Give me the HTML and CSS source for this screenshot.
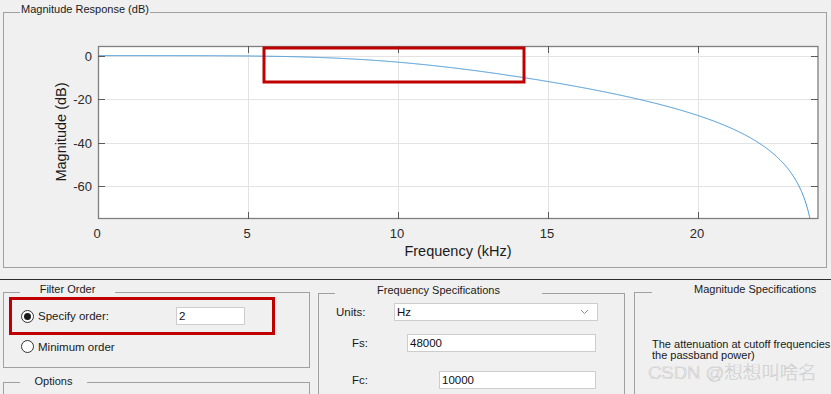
FILE: index.html
```html
<!DOCTYPE html>
<html lang="en">
<head>
  <meta charset="UTF-8">
  <title>Filter Designer</title>
  <link rel="stylesheet" href="styles.css">
</head>
<body>
  <div class="plot-panel">
    <span class="panel-title plot-title">Magnitude Response (dB)</span>
    <svg class="plot" width="822" height="254" viewBox="4 13 822 254">
      <defs>
        <clipPath id="axclip"><rect x="98" y="46" width="720" height="173"/></clipPath>
      </defs>
      <rect x="98" y="46" width="720" height="173" fill="#fff"/>
      <g class="grid" id="grid"></g>
      <polyline id="curve" class="curve" clip-path="url(#axclip)" points=""/>
      <rect class="axbox" x="98.5" y="46.5" width="719.5" height="172"/>
      <g class="ticks" id="ticks"></g>
      <g class="tick-labels" id="labels"></g>
      <text class="axis-label" x="458" y="256" text-anchor="middle">Frequency (kHz)</text>
      <text class="axis-label" transform="translate(66,132) rotate(-90)" text-anchor="middle">Magnitude (dB)</text>
      <rect class="mark" x="264" y="48" width="260" height="34"/>
    </svg>
  </div>

  <div class="separator"></div>

  <div class="controls">
    <div class="left-col">
      <div class="group filter-order">
        <span class="panel-title fo-title">Filter Order</span>
        <div class="highlight">
          <span class="radio checked"></span>
          <span class="radio-label">Specify order:</span>
          <input class="field order-field" type="text" value="2">
        </div>
        <div class="radio-row">
          <span class="radio"></span>
          <span class="radio-label">Minimum order</span>
        </div>
      </div>
      <div class="group options">
        <span class="panel-title opt-title">Options</span>
      </div>
    </div>

    <div class="group freq-spec">
      <span class="panel-title fs-title">Frequency Specifications</span>
      <div class="spec-row units-row">
        <span class="spec-label units-label">Units:</span>
        <div class="field select">
          <span>Hz</span>
          <svg width="9" height="6" viewBox="0 0 9 6"><polyline points="1,1 4.5,4.5 8,1" fill="none" stroke="#8a8a8a" stroke-width="1"/></svg>
        </div>
      </div>
      <div class="spec-row fs-row">
        <span class="spec-label">Fs:</span>
        <input class="field fs-field" type="text" value="48000">
      </div>
      <div class="spec-row fc-row">
        <span class="spec-label">Fc:</span>
        <input class="field fc-field" type="text" value="10000">
      </div>
    </div>

    <div class="group mag-spec">
      <span class="panel-title ms-title">Magnitude Specifications</span>
      <p class="note">The attenuation at cutoff frequencies<br>the passband power)</p>
      <div class="watermark">CSDN @想想叫啥名</div>
    </div>
  </div>

  <script>
    // axes mapping: 0..24 kHz -> x 98..818, dB -> y
    const X0 = 98, PX_PER_KHZ = 30;
    const Y0 = 55.6, PX_PER_DB = 2.18;
    const NS = 'http://www.w3.org/2000/svg';

    function el(tag, attrs, text) {
      const e = document.createElementNS(NS, tag);
      for (const k in attrs) e.setAttribute(k, attrs[k]);
      if (text !== undefined) e.textContent = text;
      return e;
    }

    const grid = document.getElementById('grid');
    const ticks = document.getElementById('ticks');
    const labels = document.getElementById('labels');

    [0, 5, 10, 15, 20].forEach(k => {
      const x = Math.round(X0 + k * PX_PER_KHZ) + 0.5;
      if (k > 0) {
        grid.appendChild(el('line', { x1: x, y1: 46, x2: x, y2: 219 }));
        ticks.appendChild(el('line', { x1: x, y1: 219, x2: x, y2: 212 }));
        ticks.appendChild(el('line', { x1: x, y1: 46, x2: x, y2: 53 }));
      }
      labels.appendChild(el('text', { x: X0 + k * PX_PER_KHZ - 1, y: 238, 'text-anchor': 'middle' }, String(k)));
    });

    [0, -20, -40, -60].forEach(d => {
      const y = Math.round(Y0 - d * PX_PER_DB) + 0.5;
      grid.appendChild(el('line', { x1: 98, y1: y, x2: 818, y2: y }));
      ticks.appendChild(el('line', { x1: 98, y1: y, x2: 105, y2: y }));
      ticks.appendChild(el('line', { x1: 811, y1: y, x2: 818, y2: y }));
      labels.appendChild(el('text', { x: 92, y: y + 4.5, 'text-anchor': 'end' }, String(d)));
    });

    // 2nd order Butterworth lowpass, Fc = 10 kHz, Fs = 48 kHz (bilinear)
    const wc = Math.tan(Math.PI * 10 / 48);
    const pts = [];
    for (let px = 98; px <= 818; px += 0.5) {
      const f = (px - X0) / PX_PER_KHZ;
      const r = Math.tan(Math.PI * Math.min(f, 23.999) / 48) / wc;
      const db = -10 * Math.log10(1 + Math.pow(r, 4));
      const y = Math.min(Y0 - db * PX_PER_DB, 240);
      pts.push(px.toFixed(1) + ',' + y.toFixed(2));
      if (y >= 240) break;
    }
    document.getElementById('curve').setAttribute('points', pts.join(' '));
  </script>
</body>
</html>
```

FILE: styles.css
```css
body {
  margin: 0;
  width: 831px;
  height: 394px;
  overflow: hidden;
  background: #f0f0f0;
  font-family: 'Liberation Sans', Arial, sans-serif;
  color: #1a1a1a;
  font-size: 11px;
}
.panel-title {
  position: absolute;
  top: -10px;
  height: 13px;
  line-height: 13px;
  font-size: 11px;
  background: #f0f0f0;
  color: #1a1a1a;
  text-align: center;
  white-space: nowrap;
}
.plot-panel {
  position: relative;
  margin: 12px 0 0 3px;
  width: 822px;
  height: 254px;
  border: 1px solid #a0a0a0;
}
.plot-title {
  left: 16px;
  width: 130px;
}
.plot {
  display: block;
}
.grid line {
  stroke: #e3e3e3;
  stroke-width: 1;
}
.ticks line {
  stroke: #5a5a5a;
  stroke-width: 1;
}
.axbox {
  fill: none;
  stroke: #7f7f7f;
  stroke-width: 1.3;
}
.curve {
  fill: none;
  stroke: #3f93d3;
  stroke-width: 1;
}
.tick-labels text {
  font-family: 'Liberation Sans', Arial, sans-serif;
  font-size: 13px;
  fill: #2a2a2a;
}
.axis-label {
  font-family: 'Liberation Sans', Arial, sans-serif;
  font-size: 14.5px;
  fill: #1a1a1a;
}
.mark {
  fill: none;
  stroke: #c00000;
  stroke-width: 3;
}
.separator {
  margin-top: 11px;
  height: 0;
  border-top: 1px solid #2e2e2e;
}
.controls {
  display: flex;
  align-items: flex-start;
  width: 831px;
  height: 114px;
  overflow: hidden;
}
.group {
  position: relative;
  box-sizing: border-box;
  border: 1px solid #a0a0a0;
}
.left-col {
  display: flex;
  flex-direction: column;
  gap: 14px;
  margin: 12px 0 0 3px;
  flex: 0 0 307px;
}
.filter-order {
  height: 76px;
}
.fo-title {
  left: 16px;
  width: 95px;
}
.options {
  height: 12px;
  border-bottom: none;
}
.opt-title {
  left: 16px;
  width: 67px;
  top: -8px;
}
.highlight {
  box-sizing: border-box;
  display: flex;
  align-items: center;
  width: 266px;
  height: 38px;
  margin: 4px 0 0 5px;
  padding-left: 9px;
  border: 3px solid #c00000;
}
.radio {
  box-sizing: border-box;
  flex: 0 0 13px;
  width: 13px;
  height: 13px;
  border: 1px solid #333;
  border-radius: 50%;
  background: #fff;
  display: flex;
  align-items: center;
  justify-content: center;
}
.radio.checked::after {
  content: "";
  width: 7px;
  height: 7px;
  border-radius: 50%;
  background: #1a1a1a;
}
.radio-label {
  margin-left: 4px;
  font-size: 11.5px;
}
.highlight .radio-label {
  flex: 0 0 138px;
}
.field {
  box-sizing: border-box;
  height: 18px;
  border: 1px solid #cdcdcd;
  background: #fff;
  font-family: 'Liberation Sans', Arial, sans-serif;
  font-size: 11.5px;
  color: #111;
  padding: 0 2px;
  margin: 0;
  outline: none;
}
.order-field {
  width: 69px;
}
.radio-row {
  display: flex;
  align-items: center;
  margin: 5px 0 0 17px;
}
.freq-spec {
  margin: 13px 0 0 8px;
  flex: 0 0 307px;
  height: 101px;
  border-bottom: none;
  padding: 9px 28px 0 0;
}
.fs-title {
  left: 16px;
  width: 207px;
}
.spec-row {
  display: flex;
  align-items: center;
  height: 18px;
}
.spec-label {
  padding-left: 33px;
  font-size: 11.5px;
}
.units-row {
  margin-right: -2px;
}
.units-row .units-label {
  padding-left: 17px;
}
.select {
  display: flex;
  align-items: center;
  justify-content: space-between;
  margin-left: auto;
  width: 204px;
  padding: 0 8px 0 2px;
}
.fs-row {
  margin-top: 13px;
}
.fc-row {
  margin-top: 19px;
}
.fs-field {
  margin-left: auto;
  width: 189px;
}
.fc-field {
  margin-left: auto;
  width: 157px;
}
.mag-spec {
  margin: 12px 0 0 9px;
  flex: 0 0 260px;
  height: 102px;
  border-bottom: none;
  border-right: none;
  padding-left: 17px;
}
.ms-title {
  left: 17px;
  width: 220px;
  text-align: left;
  padding-left: 42px;
}
.note {
  margin: 46px 0 0 0;
  font-size: 11px;
  line-height: 11px;
  white-space: nowrap;
}
.watermark {
  margin: 2px 0 0 -4px;
  font-family: 'Liberation Sans', 'Noto Sans CJK SC', sans-serif;
  font-size: 18.5px;
  font-weight: 300;
  line-height: 20px;
  color: #e4e4e4;
  -webkit-text-stroke: 0.2px #a6a6a6;
  white-space: nowrap;
}
```
